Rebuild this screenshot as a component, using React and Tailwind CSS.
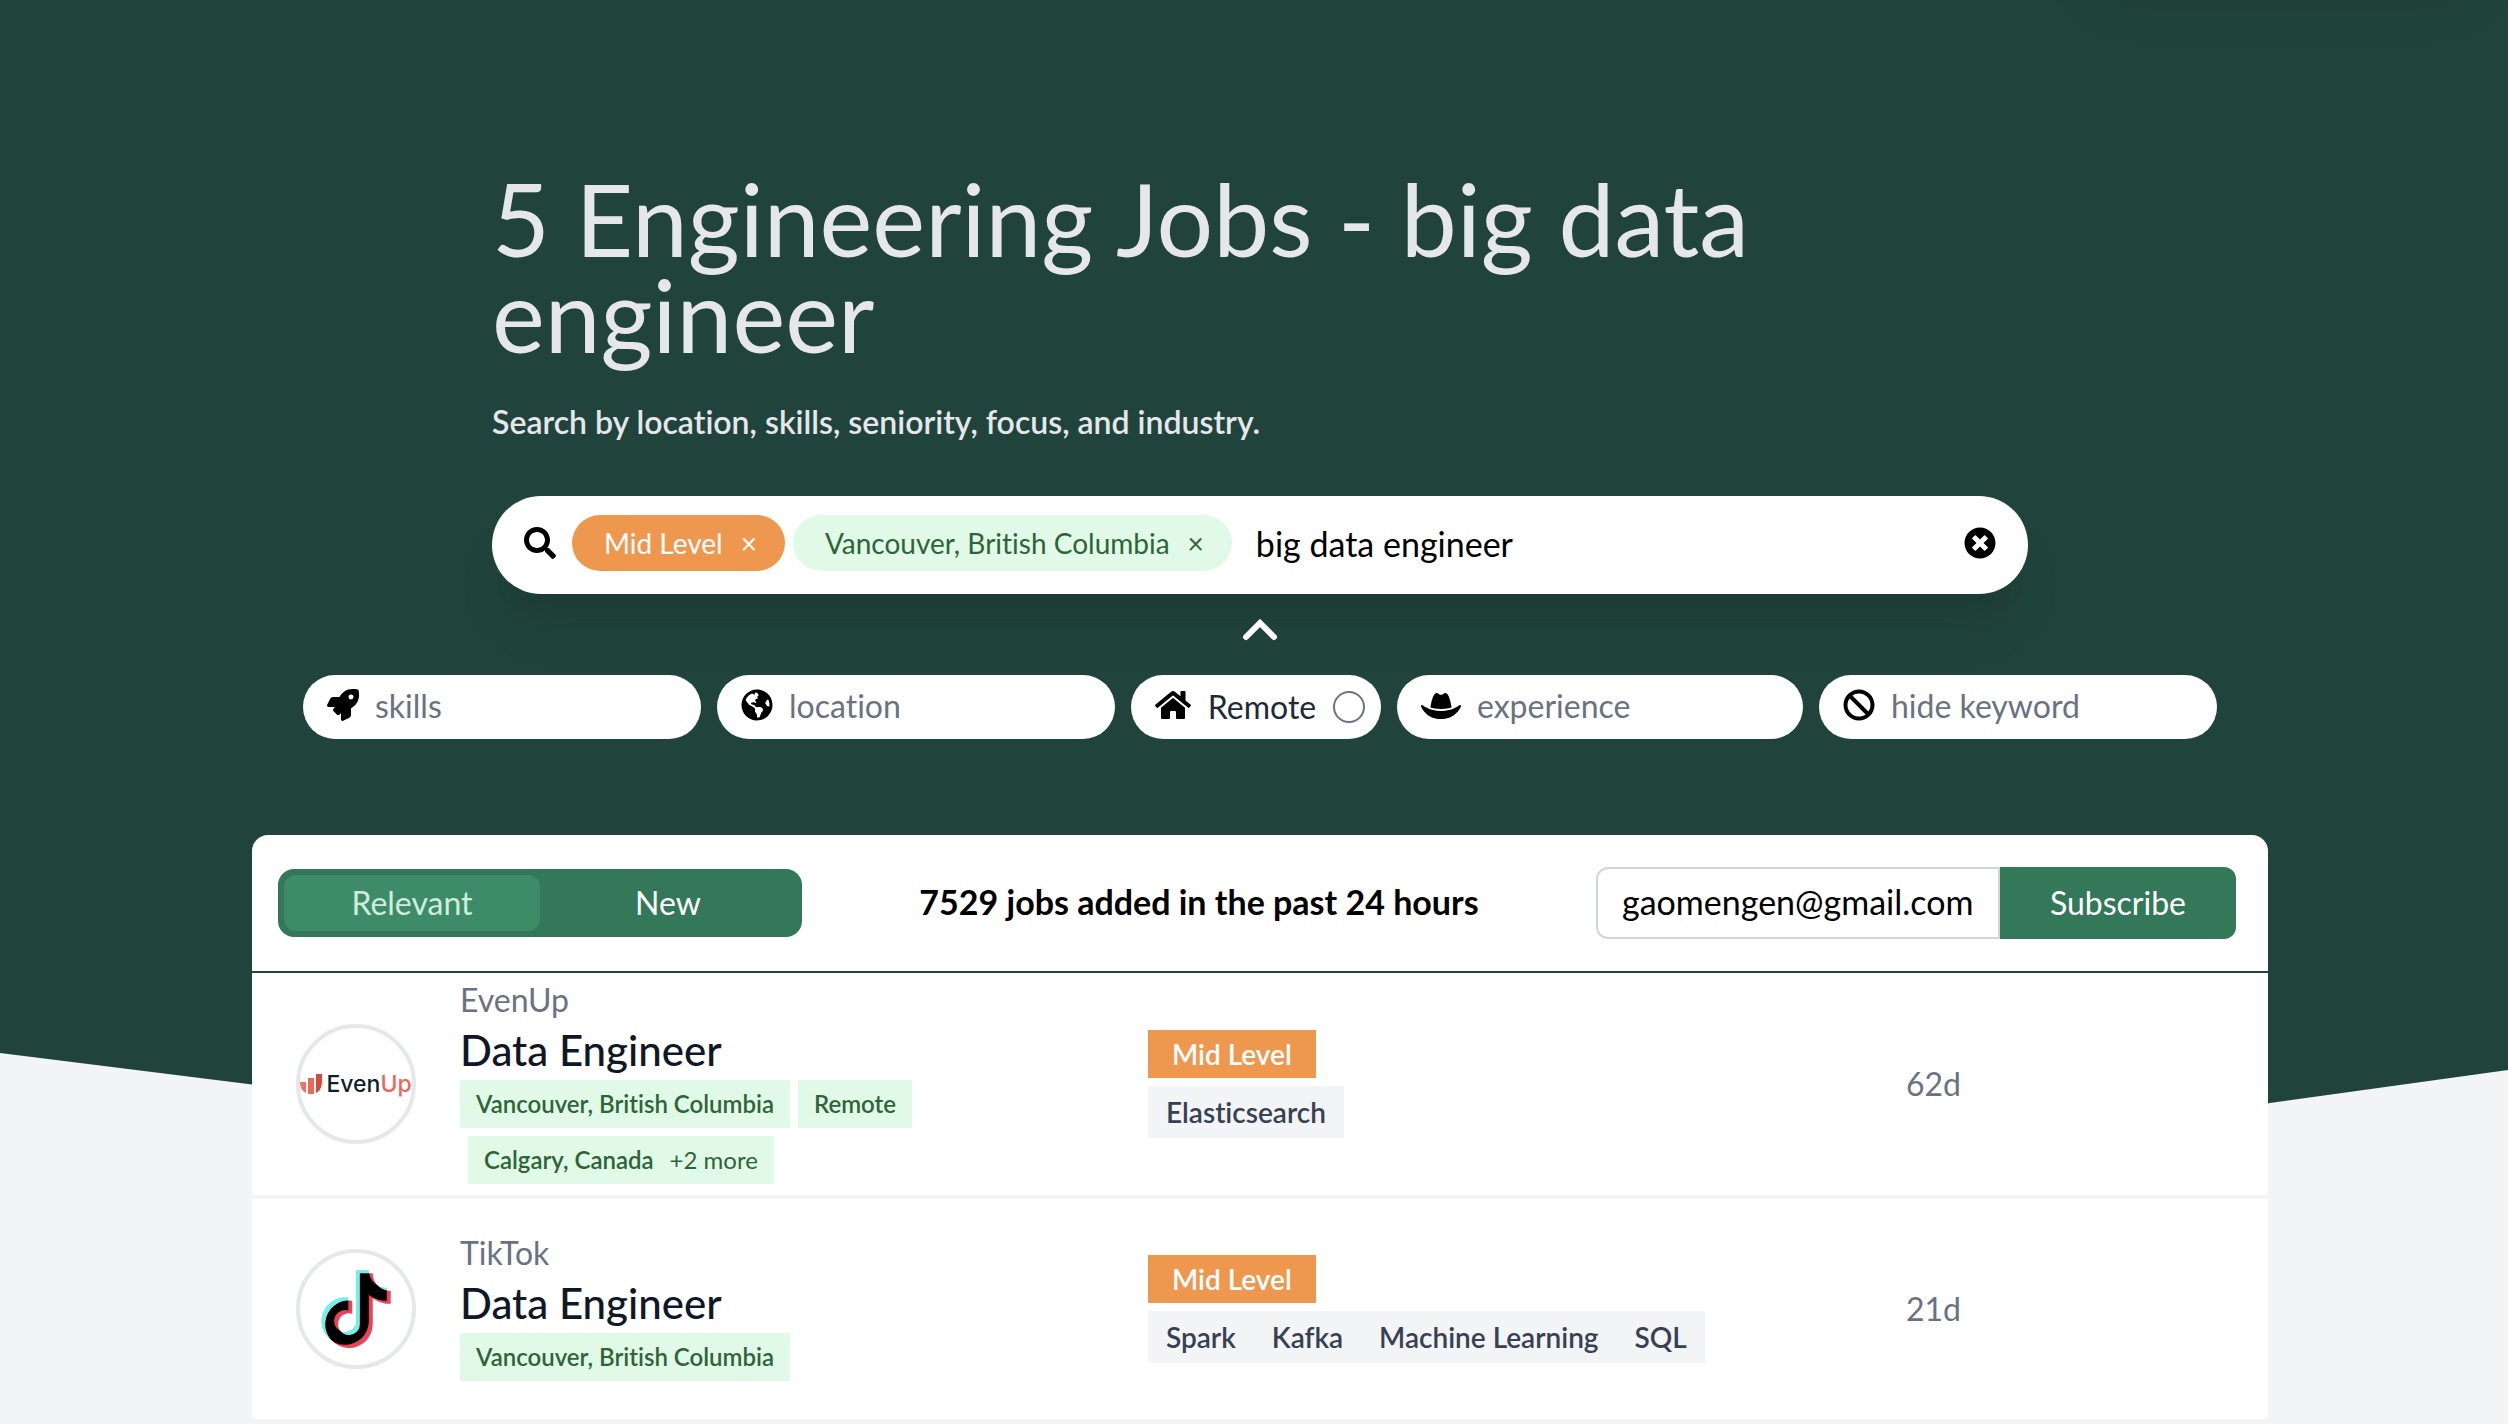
import React, { useState } from 'react';
import { FaSearch, FaTimesCircle, FaRocket, FaGlobeAmericas, FaHome, FaHatCowboy, FaBan } from 'react-icons/fa';

const jobs = [
  {
    id: 1,
    company: 'EvenUp',
    title: 'Data Engineer',
    locations: ['Vancouver, British Columbia', 'Remote', 'Calgary, Canada'],
    more: 2,
    level: 'Mid Level',
    skills: ['Elasticsearch'],
    age: '62d',
  },
  {
    id: 2,
    company: 'TikTok',
    title: 'Data Engineer',
    locations: ['Vancouver, British Columbia'],
    more: 0,
    level: 'Mid Level',
    skills: ['Spark', 'Kafka', 'Machine Learning', 'SQL'],
    age: '21d',
  },
];

const EvenUpLogo = () => (
  <div className="flex items-center gap-1">
    <svg width="22" height="20" viewBox="0 0 22 20" aria-hidden="true">
      <path d="M0 8h6v11C2 17 0 13 0 8z" fill="#ed7168" />
      <path d="M8 4h6v16H8z" fill="#e8695a" />
      <path d="M16 0h6v7c0 6-2 10-6 12z" fill="#d9483b" />
    </svg>
    <span className="font-[Inter,sans-serif] text-[23px] leading-8 font-medium text-[#0f1f2b]">
      Even<span className="text-[#e8695a]">Up</span>
    </span>
  </div>
);

const NOTE =
  'M448 209.9a210.1 210.1 0 0 1-122.8-39.3v178.8A162.6 162.6 0 1 1 185 188.3v89.9a74.6 74.6 0 1 0 52.2 71.2V0h88a121 121 0 0 0 1.9 22.2 122.2 122.2 0 0 0 53.9 80.2 121 121 0 0 0 67 20.1z';

// black is the overlap of the cyan and the red note
const TikTokLogo = () => (
  <svg width="70" height="78" viewBox="0 0 475 534" aria-hidden="true">
    <clipPath id="note-overlap">
      <path d={NOTE} transform="translate(27 22)" />
    </clipPath>
    <path d={NOTE} fill="#6ff0ea" />
    <path d={NOTE} fill="#ea4359" transform="translate(27 22)" />
    <g clipPath="url(#note-overlap)">
      <path d={NOTE} fill="#000" />
    </g>
  </svg>
);

const logos = { EvenUp: EvenUpLogo, TikTok: TikTokLogo };

const FilterInput = ({ icon: Icon, placeholder, iconClass }) => (
  <label className="flex h-16 min-w-0 items-center gap-4 rounded-full bg-white px-6">
    <Icon className={`mb-1 h-8 shrink-0 ${iconClass}`} />
    <input
      type="text"
      aria-label={placeholder}
      placeholder={placeholder}
      className="mb-0.5 w-full min-w-0 bg-transparent text-[32px] text-gray-900 outline-none placeholder:text-gray-500"
    />
  </label>
);

const JobRow = ({ job }) => {
  const Logo = logos[job.company];
  const last = job.locations.length - 1;

  return (
    <li className="grid min-h-56 grid-cols-[208px_688fr_758fr_362fr] items-center border-b-4 border-gray-100 py-[3px]">
      <div className="ml-11 flex size-30 items-center justify-center overflow-hidden rounded-full border-4 border-gray-200">
        <Logo />
      </div>
      <div>
        <p className="text-[32px] leading-12 text-gray-500">{job.company}</p>
        <h2 className="pb-1 text-[42px] leading-13 font-medium text-gray-900">
          <a href="#job">{job.title}</a>
        </h2>
        <div className="flex flex-wrap">
          {job.locations.map((location, i) => (
            <span
              key={location}
              className="mb-2 ml-2 flex h-12 items-center gap-4 bg-[#e1fae7] px-4 text-2xl font-semibold text-[#2f6439] first:ml-0"
            >
              {location}
              {i === last && job.more > 0 && <span className="font-normal">+{job.more} more</span>}
            </span>
          ))}
        </div>
      </div>
      <div className="flex flex-col items-start gap-2">
        <span className="flex h-12 items-center bg-[#ee984f] px-6 text-[28px] font-semibold text-white">{job.level}</span>
        <div className="flex h-13 items-center bg-gray-100">
          {job.skills.map((skill) => (
            <span key={skill} className="px-[18px] text-[28px] font-semibold text-gray-700">{skill}</span>
          ))}
        </div>
      </div>
      <p className="text-[32px] text-gray-500">{job.age}</p>
    </li>
  );
};

export default function App() {
  const [sort, setSort] = useState('Relevant');
  const [query, setQuery] = useState('big data engineer');
  const [email, setEmail] = useState('gaomengen@gmail.com');
  const [remote, setRemote] = useState(false);

  return (
    <div className="relative isolate min-h-screen overflow-hidden bg-gray-100 font-[Lato,sans-serif] [font-variant-ligatures:none]">
      <svg
        className="absolute inset-x-0 top-0 -z-10 h-[1226px] w-full"
        viewBox="0 0 2508 1226"
        preserveAspectRatio="none"
        aria-hidden="true"
      >
        <path d="M0 0h2508v1070L1386 1226 0 1053z" fill="#20443c" />
      </svg>
      {/* menu panel parked above the page, only its shadow shows */}
      <div className="absolute -top-32 right-6 h-24 w-100 rounded-2xl shadow-[0_40px_50px_-10px_rgba(0,0,0,0.1)]" aria-hidden="true" />

      <main className="pt-[170px] pr-[240px] pl-[252px]">
        <header className="mx-auto max-w-[1536px]">
          <h1 className="text-[100px] leading-24 text-gray-200">5 Engineering Jobs - big data engineer</h1>
          <p className="mt-9 text-[32px] leading-12 font-semibold text-gray-200">
            Search by location, skills, seniority, focus, and industry.
          </p>
          <form
            onSubmit={(e) => e.preventDefault()}
            className="mt-[50px] flex h-[98px] items-center rounded-full bg-white px-8 pb-1 shadow-[0_40px_50px_-10px_rgba(0,0,0,0.1),0_20px_20px_-10px_rgba(0,0,0,0.04)]"
          >
            <FaSearch className="size-8 shrink-0" />
            <span className="ml-4 flex h-14 shrink-0 items-center gap-[18px] rounded-full bg-[#ee984f] pr-7 pl-8 text-[28px] text-white">
              Mid Level
              <button type="button" aria-label="Remove Mid Level">×</button>
            </span>
            <span className="ml-2 flex h-14 shrink-0 items-center gap-[18px] rounded-full bg-[#e1fae7] pr-7 pl-8 text-[28px] text-[#2f6439]">
              Vancouver, British Columbia
              <button type="button" aria-label="Remove Vancouver, British Columbia">×</button>
            </span>
            <input
              type="text"
              aria-label="Search jobs"
              value={query}
              onChange={(e) => setQuery(e.target.value)}
              className="ml-6 min-w-0 flex-1 text-[34px] outline-none"
            />
            <button type="button" aria-label="Clear search" onClick={() => setQuery('')}>
              <FaTimesCircle className="size-8" />
            </button>
          </form>
        </header>

        <button type="button" aria-label="Hide filters" className="mx-auto mt-6 block">
          <svg width="36" height="24" viewBox="0 0 36 24" fill="none" stroke="#f9fafb" strokeWidth="6" strokeLinecap="round" strokeLinejoin="miter">
            <path d="M4 19 18 5l14 14" />
          </svg>
        </button>

        <div className="mx-auto mt-[33px] grid max-w-[1914px] grid-cols-[398fr_398fr_250fr_406fr_398fr] gap-4">
          <FilterInput icon={FaRocket} placeholder="skills" iconClass="w-8" />
          <FilterInput icon={FaGlobeAmericas} placeholder="location" iconClass="w-8" />
          <label className="flex h-16 items-center justify-between rounded-full bg-white pr-4 pl-6 text-[32px] text-gray-800">
            <FaHome className="mb-1 h-8 w-9 shrink-0 text-black" />
            Remote
            <input
              type="checkbox"
              checked={remote}
              onChange={(e) => setRemote(e.target.checked)}
              className="size-8 appearance-none rounded-full border-2 border-gray-500 checked:bg-[#34785a]"
            />
          </label>
          <FilterInput icon={FaHatCowboy} placeholder="experience" iconClass="w-10" />
          <FilterInput icon={FaBan} placeholder="hide keyword" iconClass="w-8" />
        </div>

        <section className="mt-24 rounded-t-2xl bg-white">
          <div className="flex h-[138px] items-center justify-between border-b-2 border-[#20443c] pr-8 pl-[26px]">
            <div className="flex rounded-2xl bg-[#34785a] p-1.5 text-[32px]">
              {['Relevant', 'New'].map((label) => (
                <button
                  key={label}
                  type="button"
                  onClick={() => setSort(label)}
                  className={`h-14 w-64 rounded-xl ${sort === label ? 'bg-[#3e8b68] text-[#cdeedd]' : 'text-white'}`}
                >
                  {label}
                </button>
              ))}
            </div>
            <p className="pb-1 text-[34px] font-bold">7529 jobs added in the past 24 hours</p>
            <form className="flex h-18" onSubmit={(e) => e.preventDefault()}>
              <input
                type="email"
                aria-label="Email"
                value={email}
                onChange={(e) => setEmail(e.target.value)}
                className="w-[404px] rounded-l-xl border-2 border-gray-300 px-6 pb-1 text-[34px] outline-none"
              />
              <button type="submit" className="w-[236px] rounded-r-xl bg-[#34785a] text-[32px] text-white">Subscribe</button>
            </form>
          </div>
          <ul>
            {jobs.map((job) => (
              <JobRow key={job.id} job={job} />
            ))}
          </ul>
        </section>
      </main>
    </div>
  );
}
